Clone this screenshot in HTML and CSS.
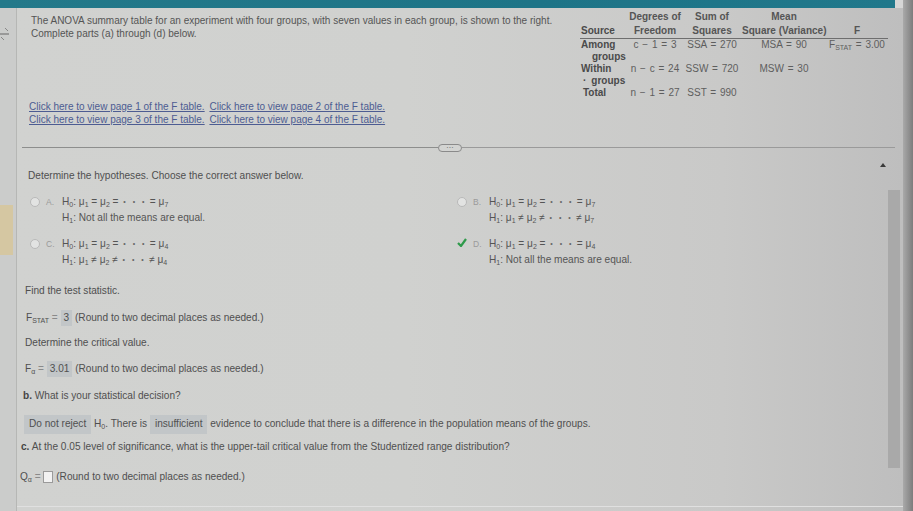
FILE: index.html
```html
<!DOCTYPE html>
<html>
<head>
<meta charset="utf-8">
<link rel="stylesheet" href="styles.css">
</head>
<body>
<div class="frame">
  <div class="screen">
    <div class="topbar"><div class="teal"></div></div>
    <div class="body">
      <div class="sidebar">
        <svg class="side-icon" width="12" height="14" viewBox="0 0 12 14"><path d="M0 7H9" stroke="#777" stroke-width="1.2"/><path d="M5 1L8 4M1 10L4 13" stroke="#888" stroke-width="1"/></svg>
        <div class="tan"></div>
      </div>
      <div class="main">
        <div class="question">
          <div class="qleft">
            <p class="qtext">The ANOVA summary table for an experiment with four groups, with seven values in each group, is shown to the right.<br>Complete parts (a) through (d) below.</p>
            <div class="links">
              <div><a>Click here to view page 1 of the F table.</a> <a>Click here to view page 2 of the F table.</a></div>
              <div><a>Click here to view page 3 of the F table.</a> <a>Click here to view page 4 of the F table.</a></div>
            </div>
          </div>
          <table class="anova">
            <colgroup><col class="c1"><col class="c2"><col class="c3"><col class="c4"><col class="c5"></colgroup>
            <tr class="h1"><th></th><th>Degrees of</th><th>Sum of</th><th>Mean</th><th></th></tr>
            <tr class="h2"><th class="src">Source</th><th>Freedom</th><th>Squares</th><th>Square (Variance)</th><th>F</th></tr>
            <tr class="r"><td class="src">Among<br><span class="ind">groups</span></td><td>c − 1 = 3</td><td>SSA = 270</td><td>MSA = 90</td><td>F<sub>STAT</sub> = 3.00</td></tr>
            <tr class="r"><td class="src">Within<br><span class="dot">·</span><span class="ind2">groups</span></td><td>n − c = 24</td><td>SSW = 720</td><td>MSW = 30</td><td></td></tr>
            <tr class="r"><td class="src tot">Total</td><td>n − 1 = 27</td><td>SST = 990</td><td></td><td></td></tr>
          </table>
        </div>
        <div class="divider"><span class="seg left"></span><span class="pill">• • •</span><span class="seg right"></span></div>
        <div class="lower">
          <div class="answers">
            <p class="line l-det">Determine the hypotheses. Choose the correct answer below.</p>
            <div class="options">
              <div class="opt">
                <span class="radio"></span><span class="lab">A.</span>
                <div class="otext">
                  <div>H<sub>0</sub>: μ<sub>1</sub> = μ<sub>2</sub> = <span class="dots">• • •</span> = μ<sub>7</sub></div>
                  <div>H<sub>1</sub>: Not all the means are equal.</div>
                </div>
              </div>
              <div class="opt">
                <span class="radio"></span><span class="lab">B.</span>
                <div class="otext">
                  <div>H<sub>0</sub>: μ<sub>1</sub> = μ<sub>2</sub> = <span class="dots">• • •</span> = μ<sub>7</sub></div>
                  <div>H<sub>1</sub>: μ<sub>1</sub> ≠ μ<sub>2</sub> ≠ <span class="dots">• • •</span> ≠ μ<sub>7</sub></div>
                </div>
              </div>
              <div class="opt">
                <span class="radio"></span><span class="lab">C.</span>
                <div class="otext">
                  <div>H<sub>0</sub>: μ<sub>1</sub> = μ<sub>2</sub> = <span class="dots">• • •</span> = μ<sub>4</sub></div>
                  <div>H<sub>1</sub>: μ<sub>1</sub> ≠ μ<sub>2</sub> ≠ <span class="dots">• • •</span> ≠ μ<sub>4</sub></div>
                </div>
              </div>
              <div class="opt">
                <span class="check"><svg width="10" height="9" viewBox="0 0 10 9"><path d="M1 5L4 8L9 1" stroke="#2e9a4a" stroke-width="2.2" fill="none"/></svg></span><span class="lab">D.</span>
                <div class="otext">
                  <div>H<sub>0</sub>: μ<sub>1</sub> = μ<sub>2</sub> = <span class="dots">• • •</span> = μ<sub>4</sub></div>
                  <div>H<sub>1</sub>: Not all the means are equal.</div>
                </div>
              </div>
            </div>
            <p class="line l-find">Find the test statistic.</p>
            <p class="line l-fstat">F<sub>STAT</sub> <span class="eq">=</span> <span class="box">3</span> (Round to two decimal places as needed.)</p>
            <p class="line l-crit">Determine the critical value.</p>
            <p class="line l-fa">F<sub>α</sub> <span class="eq">=</span> <span class="box">3.01</span> (Round to two decimal places as needed.)</p>
            <p class="line l-b"><b>b.</b> What is your statistical decision?</p>
            <p class="line l-dec"><span class="box wide">Do not reject</span> H<sub>0</sub>. There is <span class="box wide">insufficient</span> evidence to conclude that there is a difference in the population means of the groups.</p>
            <p class="line l-c"><b>c.</b> At the 0.05 level of significance, what is the upper-tail critical value from the Studentized range distribution?</p>
            <p class="line l-q">Q<sub>α</sub> <span class="eq">=</span> <span class="blank"></span> (Round to two decimal places as needed.)</p>
          </div>
          <div class="scroll">
            <span class="arrow"></span>
            <div class="thumb"></div>
          </div>
        </div>
      </div>
    </div>
  </div>
  <div class="bezel"></div>
</div>
</body>
</html>
```
FILE: styles.css
```css
* { box-sizing: border-box; }
html, body { margin: 0; padding: 0; }
body {
  width: 913px;
  height: 511px;
  overflow: hidden;
  font-family: "Liberation Sans", Arial, sans-serif;
  color: #4f4f4f;
  background: #b9b9b9;
}
.frame {
  display: flex;
  width: 913px;
  height: 511px;
}
.screen {
  width: 903px;
  height: 511px;
  display: flex;
  flex-direction: column;
  background: linear-gradient(90deg, #d1d2d0 0%, #d0d1cf 45%, #c9c9c8 80%, #bebebe 100%);
}
.bezel {
  width: 10px;
  background: linear-gradient(90deg, #a9a9a9, #7d7d7d);
}
.topbar {
  height: 8px;
  background: #d6d6d6;
  flex: none;
}
.teal {
  width: 895px;
  height: 8px;
  background: linear-gradient(90deg, #23798a, #1d7487 60%, #20788b);
}
.body {
  flex: 1;
  display: flex;
  min-height: 0;
}
.sidebar {
  width: 17px;
  flex: none;
  border-right: 1px solid #b6b7b5;
  background: #cbcccb;
  display: flex;
  flex-direction: column;
}
.side-icon { margin-top: 19px; margin-left: 0; }
.tan {
  margin-top: 164px;
  width: 13px;
  height: 50px;
  background: #d5c7a2;
}
.main {
  flex: 1;
  display: flex;
  flex-direction: column;
  min-width: 0;
}
.question {
  display: flex;
  align-items: flex-start;
  padding-top: 3px;
  height: 135px;
  flex: none;
}
.qleft {
  width: 563px;
  padding-left: 14px;
  flex: none;
}
.qtext {
  margin: 3px 0 0;
  font-size: 10px;
  line-height: 13px;
  color: #555;
  white-space: nowrap;
}
.links {
  margin-top: 60px;
  margin-left: -2px;
  font-size: 10px;
  line-height: 13px;
  white-space: nowrap;
}
.links a {
  color: #4d5c92;
  text-decoration: underline;
  margin-right: 2px;
}
.anova {
  border-collapse: collapse;
  font-size: 10px;
  line-height: 12px;
  table-layout: fixed;
  width: 308px;
  color: #5e5e5e;
  margin-top: -1px;
}
.c1 { width: 48px; } .c2 { width: 54px; } .c3 { width: 60px; } .c4 { width: 84px; } .c5 { width: 62px; }
.anova th, .anova td { padding: 0; text-align: center; vertical-align: top; white-space: nowrap; }
.anova th { font-weight: bold; color: #555; line-height: 14px; }
.anova .h2 th { border-bottom: 1px solid #6e6e6e; padding-bottom: 0; }
.anova .src { text-align: left; font-weight: bold; color: #4a4a4a; padding-left: 1px; }
.anova td { word-spacing: 1px; }
.ind { padding-left: 11px; }
.dot { padding-left: 2px; }
.ind2 { padding-left: 5px; }
.tot { padding-left: 3px !important; }
.anova sub { font-size: 7px; line-height: 0; vertical-align: -2px; }
.divider {
  height: 9px;
  display: flex;
  align-items: center;
  margin-left: 5px;
  margin-right: 8px;
  flex: none;
}
.seg { height: 1px; background: #8d8e8d; }
.seg.left { width: 416px; }
.seg.right { flex: 1; background: #9a9a9a; }
.pill {
  width: 24px;
  height: 8px;
  border: 1px solid #8a8a8a;
  border-radius: 4px;
  font-size: 4px;
  line-height: 6px;
  text-align: center;
  color: #777;
  background: #d3d4d2;
}
.lower {
  flex: 1;
  display: flex;
  border-bottom: 1px solid #e0e0e0;
  margin-bottom: 4px;
}
.answers {
  flex: 1;
  padding-left: 8px;
  padding-top: 17px;
  font-size: 10.1px;
}
.line { margin: 0; line-height: 14px; height: 14px; white-space: nowrap; }
.line sub, .otext sub { font-size: 7px; line-height: 0; vertical-align: -2px; }
.l-det { margin-left: 3px; }
.options {
  display: grid;
  grid-template-columns: 427px 1fr;
  row-gap: 10px;
  margin-top: 11px;
  margin-left: 5px;
}
.opt { display: flex; align-items: flex-start; }
.radio {
  width: 10px; height: 10px;
  border-radius: 50%;
  border: 1px solid #b9b9b9;
  background: #e2e3e2;
  margin-top: 3px;
  flex: none;
}
.check { width: 10px; height: 10px; margin-top: 2px; flex: none; display: flex; }
.lab {
  width: 16px;
  margin-left: 6px;
  font-size: 8.5px;
  line-height: 16px;
  color: #9a9a9a;
  flex: none;
}
.otext { line-height: 16px; color: #555; white-space: nowrap; }
.dots { font-size: 7px; letter-spacing: 2.5px; vertical-align: 1px; color: #666; padding-left: 2px; }
.l-find { margin-top: 16px; }
.l-fstat { margin-top: 12px; margin-left: 1px; }
.l-crit { margin-top: 12px; }
.l-fa { margin-top: 11px; }
.l-b { margin-top: 14px; margin-left: -2px; }
.l-dec { margin-top: 12px; margin-left: -1px; }
.l-c { margin-top: 11px; margin-left: -4px; }
.l-q { margin-top: 16px; margin-left: -5px; }
.line b { color: #444; }
.eq { color: #8a8a8a; }
.box {
  display: inline-block;
  background: #c2c6c8;
  padding: 1px 3px;
  line-height: 14px;
  color: #505050;
}
.box.wide { padding: 2px 5px 3px; }
.blank {
  display: inline-block;
  width: 10px;
  height: 12px;
  border: 1px solid #9a9a9a;
  background: #f2f2f2;
  vertical-align: -3px;
}
.scroll {
  width: 23px;
  flex: none;
  display: flex;
  flex-direction: column;
}
.arrow {
  margin-top: 11px;
  margin-left: 0;
  width: 0; height: 0;
  border-left: 3px solid transparent;
  border-right: 3px solid transparent;
  border-bottom: 4px solid #3a3a3a;
}
.thumb {
  margin-top: 23px;
  margin-left: 8px;
  width: 12px;
  height: 278px;
  background: #a9a9a9;
}
```
